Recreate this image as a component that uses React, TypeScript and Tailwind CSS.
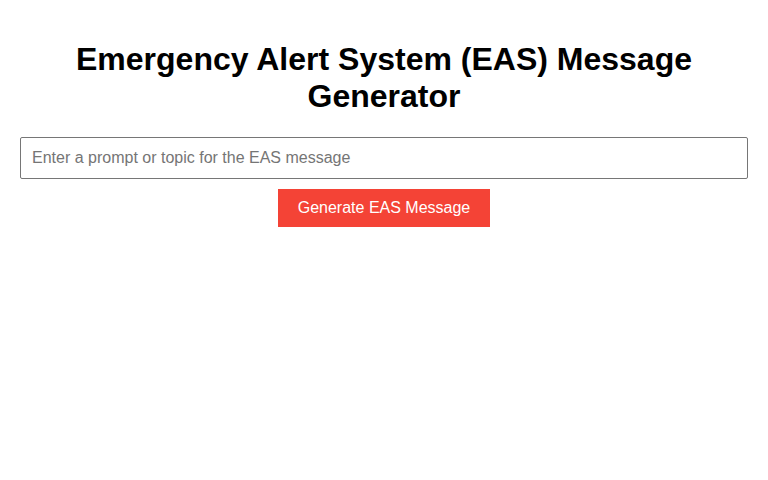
import { useState } from "react";

export default function App() {
  const [prompt, setPrompt] = useState("");

  return (
    <div className="min-h-screen bg-white p-5 text-black font-['Liberation_Sans',Arial,sans-serif]">
      <h1 className="mt-[21px] mb-[22px] text-center text-[32px] font-bold leading-[37px]">
        Emergency Alert System (EAS) Message Generator
      </h1>

      <div className="flex flex-col items-center">
        <input
          type="text"
          value={prompt}
          onChange={e => setPrompt(e.target.value)}
          placeholder="Enter a prompt or topic for the EAS message"
          className="box-border h-[42px] w-full rounded-[2px] border border-[#767676] px-[11px] text-base text-black placeholder:text-[#757575] outline-none"
        />
        <button
          type="button"
          className="mt-[10px] h-[38px] bg-[#f44336] px-5 text-base text-white"
        >
          Generate EAS Message
        </button>
      </div>
    </div>
  );
}
